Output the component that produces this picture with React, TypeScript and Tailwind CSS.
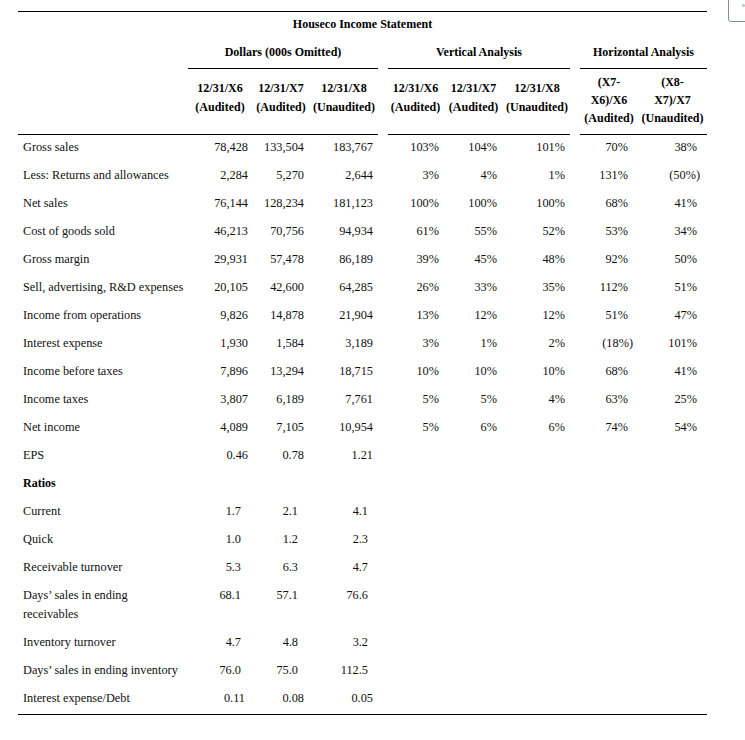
import React from "react";

type Kind = "num" | "ratio" | "last" | "heading";
type Row = { label: React.ReactNode; d?: string[]; v?: string[]; h?: string[]; kind: Kind };

const rows: Row[] = [
  { label: "Gross sales", d: ["78,428", "133,504", "183,767"], v: ["103%", "104%", "101%"], h: ["70%", "38%"], kind: "num" },
  { label: "Less: Returns and allowances", d: ["2,284", "5,270", "2,644"], v: ["3%", "4%", "1%"], h: ["131%", "(50%)"], kind: "num" },
  { label: "Net sales", d: ["76,144", "128,234", "181,123"], v: ["100%", "100%", "100%"], h: ["68%", "41%"], kind: "num" },
  { label: "Cost of goods sold", d: ["46,213", "70,756", "94,934"], v: ["61%", "55%", "52%"], h: ["53%", "34%"], kind: "num" },
  { label: "Gross margin", d: ["29,931", "57,478", "86,189"], v: ["39%", "45%", "48%"], h: ["92%", "50%"], kind: "num" },
  { label: "Sell, advertising, R&D expenses", d: ["20,105", "42,600", "64,285"], v: ["26%", "33%", "35%"], h: ["112%", "51%"], kind: "num" },
  { label: "Income from operations", d: ["9,826", "14,878", "21,904"], v: ["13%", "12%", "12%"], h: ["51%", "47%"], kind: "num" },
  { label: "Interest expense", d: ["1,930", "1,584", "3,189"], v: ["3%", "1%", "2%"], h: ["(18%)", "101%"], kind: "num" },
  { label: "Income before taxes", d: ["7,896", "13,294", "18,715"], v: ["10%", "10%", "10%"], h: ["68%", "41%"], kind: "num" },
  { label: "Income taxes", d: ["3,807", "6,189", "7,761"], v: ["5%", "5%", "4%"], h: ["63%", "25%"], kind: "num" },
  { label: "Net income", d: ["4,089", "7,105", "10,954"], v: ["5%", "6%", "6%"], h: ["74%", "54%"], kind: "num" },
  { label: "EPS", d: ["0.46", "0.78", "1.21"], kind: "num" },
  { label: "Ratios", kind: "heading" },
  { label: "Current", d: ["1.7", "2.1", "4.1"], kind: "ratio" },
  { label: "Quick", d: ["1.0", "1.2", "2.3"], kind: "ratio" },
  { label: "Receivable turnover", d: ["5.3", "6.3", "4.7"], kind: "ratio" },
  {
    label: (
      <>
        Days’ sales in ending
        <br />
        receivables
      </>
    ),
    d: ["68.1", "57.1", "76.6"],
    kind: "ratio",
  },
  { label: "Inventory turnover", d: ["4.7", "4.8", "3.2"], kind: "ratio" },
  { label: "Days’ sales in ending inventory", d: ["76.0", "75.0", "112.5"], kind: "ratio" },
  { label: "Interest expense/Debt", d: ["0.11", "0.08", "0.05"], kind: "last" },
];

const grid =
  "grid grid-cols-[170px_64px_58px_68px_10px_55px_61px_66px_10px_58px_69px]";

const numPad = ["pr-[4px]", "pr-[6px]", "pr-[5px]"];
const ratioPad = ["pr-[11px]", "pr-[12px]", "pr-[10px]"];
const lastPad = ["pr-[7px]", "pr-[6px]", "pr-[5px]"];
const vPad = ["pr-[4px]", "pr-[7px]", "pr-[5px]"];
const hPadPos = ["pr-[10px]", "pr-[10px]"];
const hPadNeg = ["pr-[5px]", "pr-[7px]"];

const cell = "pt-[3px] pb-[6px] leading-[19px] whitespace-nowrap";

export default function App() {
  return (
    <div
      className="relative w-[745px] h-[740px] overflow-hidden bg-white text-[#111] text-[12.3px]"
      style={{ fontFamily: '"Liberation Serif", "Times New Roman", serif' }}
    >
      <div className="absolute left-[728px] top-[-2px] w-[26px] h-[24px] rounded-[3px] border border-[#7f9096] bg-white">
        <div className="absolute left-[13px] top-[5px] w-[3px] h-[3px] rounded-full bg-[#b8c2c6]" />
      </div>

      <div className="pt-[11px] pl-[18px] w-[707px]">
        <div className="w-[689px]">
          {/* Title */}
          <div className="border-t border-black pt-[3px] pb-[4px] leading-[19px] text-center font-bold text-[12px] text-black">
            Houseco Income Statement
          </div>

          {/* Group headings */}
          <div className={`${grid} font-bold text-[12px] text-black leading-[19px]`}>
            <div />
            <div className="col-span-3 border-b border-black pt-[5px] pb-[6px] text-center">
              Dollars (000s Omitted)
            </div>
            <div />
            <div className="col-span-3 border-b border-black pt-[5px] pb-[6px] text-center">
              Vertical Analysis
            </div>
            <div />
            <div className="col-span-2 border-b border-black pt-[5px] pb-[6px] text-center">
              Horizontal Analysis
            </div>
          </div>

          {/* Column headings */}
          <div className={`${grid} font-bold text-[12px] text-black`}>
            <div className="h-[66px] border-b border-black" />
            {[
              ["12/31/X6", "(Audited)"],
              ["12/31/X7", "(Audited)"],
              ["12/31/X8", "(Unaudited)"],
            ].map(([a, b], i) => (
              <div key={"d" + i} className="h-[66px] border-b border-black pt-[10px] leading-[19px] text-center whitespace-nowrap">
                <div>{a}</div>
                <div>{b}</div>
              </div>
            ))}
            <div className="h-[66px]" />
            {[
              ["12/31/X6", "(Audited)"],
              ["12/31/X7", "(Audited)"],
              ["12/31/X8", "(Unaudited)"],
            ].map(([a, b], i) => (
              <div key={"v" + i} className="h-[66px] border-b border-black pt-[10px] leading-[19px] text-center whitespace-nowrap">
                <div>{a}</div>
                <div>{b}</div>
              </div>
            ))}
            <div className="h-[66px]" />
            <div className="h-[66px] border-b border-black pt-[4px] leading-[18px] text-center whitespace-nowrap">
              <div>(X7-</div>
              <div>X6)/X6</div>
              <div>(Audited)</div>
            </div>
            <div className="h-[66px] border-b border-black pt-[4px] leading-[18px] text-center whitespace-nowrap">
              <div>(X8-</div>
              <div>X7)/X7</div>
              <div>(Unaudited)</div>
            </div>
          </div>

          {/* Body */}
          <div className={grid}>
            {rows.map((r, ri) => {
              const dp = r.kind === "ratio" ? ratioPad : r.kind === "last" ? lastPad : numPad;
              return (
                <React.Fragment key={ri}>
                  <div className={`${cell} pl-[5px] ${r.kind === "heading" ? "font-bold text-[12px] text-black" : ""}`}>
                    {r.label}
                  </div>
                  {[0, 1, 2].map((i) => (
                    <div key={"d" + i} className={`${cell} text-right ${dp[i]}`}>
                      {r.d ? r.d[i] : ""}
                    </div>
                  ))}
                  <div />
                  {[0, 1, 2].map((i) => (
                    <div key={"v" + i} className={`${cell} text-right ${vPad[i]}`}>
                      {r.v ? r.v[i] : ""}
                    </div>
                  ))}
                  <div />
                  {[0, 1].map((i) => {
                    const val = r.h ? r.h[i] : "";
                    const neg = val.startsWith("(");
                    return (
                      <div key={"h" + i} className={`${cell} text-right ${neg ? hPadNeg[i] : hPadPos[i]}`}>
                        {val}
                      </div>
                    );
                  })}
                </React.Fragment>
              );
            })}
          </div>
          <div className="border-t border-black" />
        </div>
      </div>
    </div>
  );
}
